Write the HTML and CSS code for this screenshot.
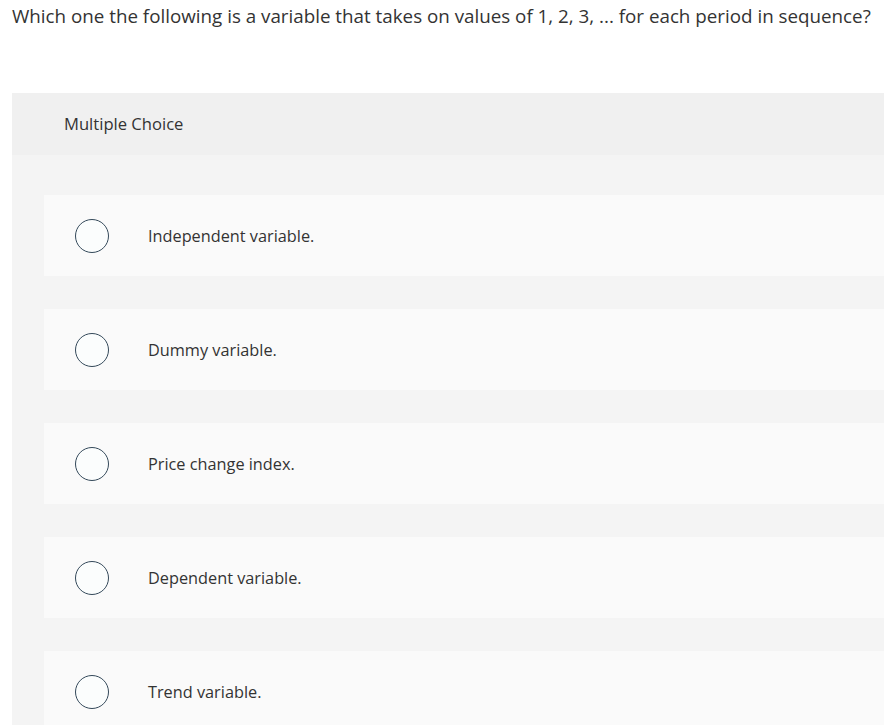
FILE: index.html
```html
<!DOCTYPE html>
<html>
<head>
<meta charset="utf-8">
<link rel="stylesheet" href="styles.css">
</head>
<body>
<p class="question">Which one the following is a variable that takes on values of 1, 2, 3, ... for each period in sequence?</p>
<div class="panel">
  <div class="panel-head">Multiple Choice</div>
  <div class="panel-body">
    <div class="option"><span class="radio"></span><span class="label">Independent variable.</span></div>
    <div class="option"><span class="radio"></span><span class="label">Dummy variable.</span></div>
    <div class="option"><span class="radio"></span><span class="label">Price change index.</span></div>
    <div class="option"><span class="radio"></span><span class="label">Dependent variable.</span></div>
    <div class="option"><span class="radio"></span><span class="label">Trend variable.</span></div>
  </div>
</div>
</body>
</html>
```
FILE: styles.css
```css
html, body {
  margin: 0;
  padding: 0;
  background: #ffffff;
  overflow: hidden;
}
body {
  padding-left: 12px;
  font-family: "Open Sans", Lato, Arial, sans-serif;
  color: #333333;
}
.question {
  margin: 0;
  height: 93px;
  padding-top: 4px;
  box-sizing: border-box;
  font-size: 18.8px;
  line-height: 24px;
  color: #333;
  white-space: nowrap;
}
.panel {
  width: 872px;
}
.panel-head {
  height: 62px;
  background: #f0f0f0;
  padding-left: 52px;
  padding-bottom: 2px;
  box-sizing: border-box;
  display: flex;
  align-items: center;
  font-size: 16.6px;
  color: #333;
}
.panel-body {
  background: #f4f4f4;
  padding: 40px 0 40px 32px;
  display: flex;
  flex-direction: column;
  gap: 33px;
}
.option {
  height: 81px;
  background: #fafafa;
  display: flex;
  align-items: center;
  padding-left: 31px;
}
.radio {
  width: 34px;
  height: 34px;
  box-sizing: border-box;
  border: 1.3px solid #34495a;
  border-radius: 50%;
  background: #fbfdfd;
  flex: none;
}
.label {
  margin-left: 39px;
  font-size: 16.3px;
  color: #333;
}
```
